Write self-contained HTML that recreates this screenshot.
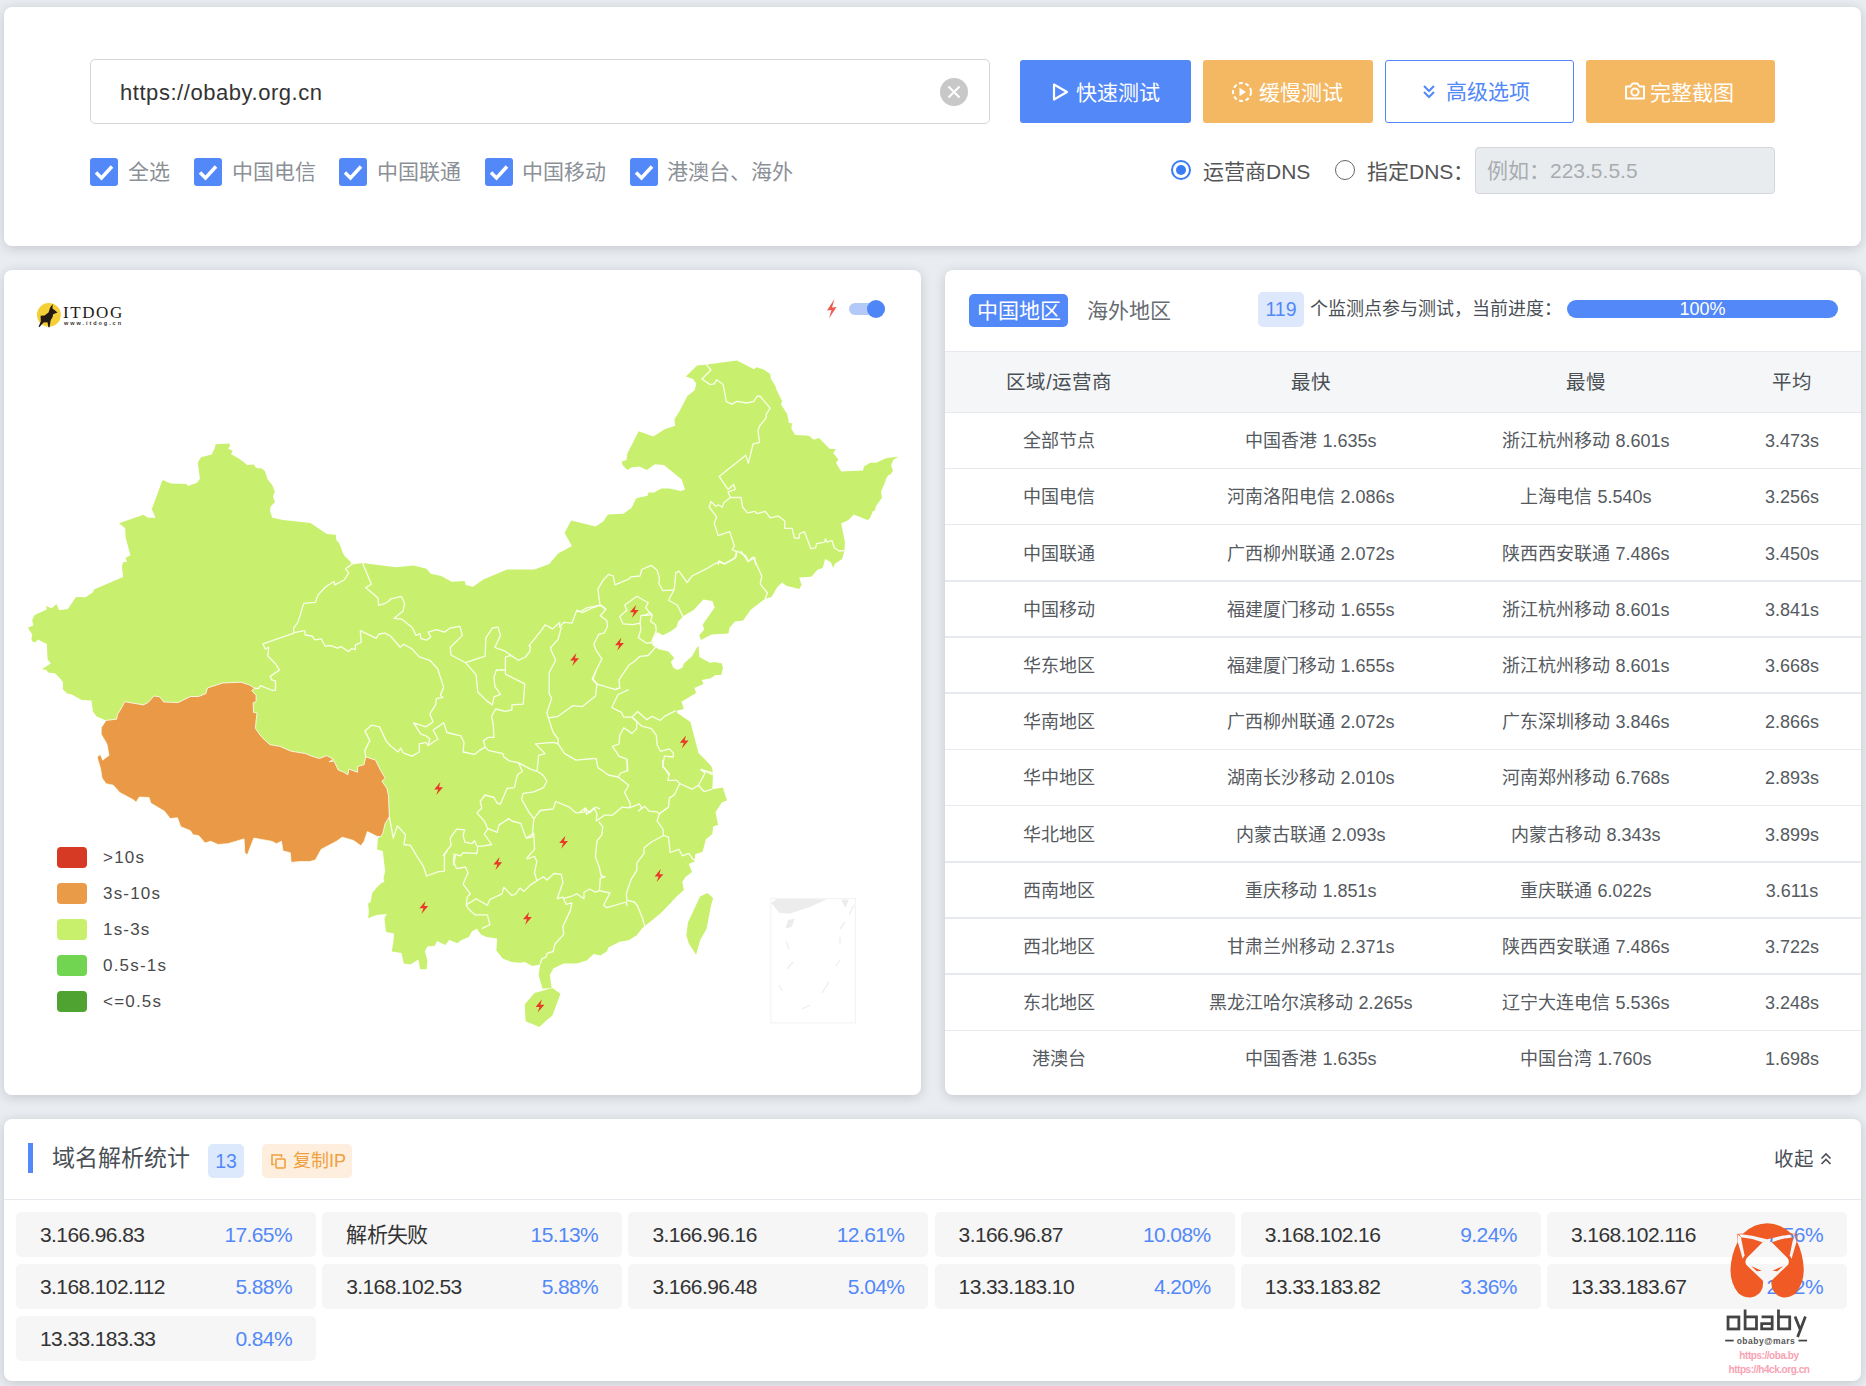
<!DOCTYPE html>
<html lang="zh-CN"><head><meta charset="utf-8">
<style>
*{box-sizing:border-box;margin:0;padding:0}
html,body{width:1866px;height:1386px;overflow:hidden}
body{background:#e9ecf1;font-family:"Liberation Sans",sans-serif;color:#333;position:relative}
.abs{position:absolute}
.panel{position:absolute;background:#fff;border-radius:8px;box-shadow:0 2px 12px rgba(0,0,0,.16)}
.cb{position:absolute;top:158px;width:28px;height:28px;border-radius:3px;background:#5288f8}
.cb svg{position:absolute;left:0;top:0}
.lbl{position:absolute;top:158px;height:28px;line-height:28px;font-size:21px;color:#8b9097;white-space:nowrap}
.btn{position:absolute;top:60px;height:63px;border-radius:3px;color:#fff;font-size:21px;line-height:63px;white-space:nowrap}
.btn span{position:absolute;top:1px}
.th{position:absolute;top:351px;height:62px;line-height:62px;font-size:19.5px;color:#4a4f55;text-align:center;white-space:nowrap}
.row{position:absolute;left:945px;width:916px;height:56px;border-top:1.5px solid #e4e7ec}
.cell{position:absolute;top:0;height:56px;line-height:58px;font-size:18px;color:#555a60;text-align:center;white-space:nowrap}
.card{position:absolute;width:300px;height:45px;background:#f6f6f6;border-radius:5px;font-size:21px;line-height:45px;letter-spacing:-0.6px}
.card .ip{position:absolute;left:24px;top:0;color:#333}
.card .pc{position:absolute;right:24px;top:0;color:#5288f8}
</style></head><body>

<!-- top panel -->
<div class="panel" style="left:4px;top:7px;width:1857px;height:239px"></div>
<div class="abs" style="left:90px;top:59px;width:900px;height:65px;border:1.5px solid #d3d7dc;border-radius:5px;background:#fff"></div>
<div class="abs" style="left:120px;top:60px;height:65px;line-height:65px;font-size:22px;color:#333;letter-spacing:0.55px">https://obaby.org.cn</div>
<div class="abs" style="left:940px;top:78px;width:28px;height:28px;border-radius:50%;background:#c8c8c8">
 <svg width="28" height="28" viewBox="0 0 28 28"><path d="M8.5 8.5L19.5 19.5M19.5 8.5L8.5 19.5" stroke="#fff" stroke-width="2.2" fill="none"/></svg>
</div>

<div class="btn" style="left:1020px;width:171px;background:#5288f8">
 <svg class="abs" style="left:32px;top:23px" width="17" height="18" viewBox="0 0 17 18"><path d="M2 1.5L15 9L2 16.5Z" fill="none" stroke="#fff" stroke-width="2.2" stroke-linejoin="round"/></svg>
 <span style="left:56px">快速测试</span>
</div>
<div class="btn" style="left:1203px;width:170px;background:#f4b862">
 <svg class="abs" style="left:28px;top:21px" width="22" height="22" viewBox="0 0 22 22"><circle cx="11" cy="11" r="9" fill="none" stroke="#fff" stroke-width="2" stroke-dasharray="4 2.5"/><path d="M8.5 6.8L15 11L8.5 15.2Z" fill="#fff"/></svg>
 <span style="left:56px">缓慢测试</span>
</div>
<div class="btn" style="left:1385px;width:189px;background:#fff;border:1.5px solid #5288f8;color:#5288f8">
 <svg class="abs" style="left:36px;top:22px" width="14" height="18" viewBox="0 0 14 18"><path d="M2 3L7 8L12 3M2 9L7 14L12 9" fill="none" stroke="#5288f8" stroke-width="2"/></svg>
 <span style="left:60px;line-height:60px">高级选项</span>
</div>
<div class="btn" style="left:1586px;width:189px;background:#f4b862">
 <svg class="abs" style="left:38px;top:21px" width="22" height="20" viewBox="0 0 22 20"><path d="M2 5.5h4.5l2-3h5l2 3H20v12H2z" fill="none" stroke="#fff" stroke-width="2" stroke-linejoin="round"/><circle cx="11" cy="11" r="3.6" fill="none" stroke="#fff" stroke-width="2"/></svg>
 <span style="left:64px">完整截图</span>
</div>

<div class="cb" style="left:90px"><svg width="28" height="28"><path d="M6 14.5L11.5 20L22 8.5" fill="none" stroke="#fff" stroke-width="3.5"/></svg></div>
<div class="lbl" style="left:128px">全选</div>
<div class="cb" style="left:194px"><svg width="28" height="28"><path d="M6 14.5L11.5 20L22 8.5" fill="none" stroke="#fff" stroke-width="3.5"/></svg></div>
<div class="lbl" style="left:232px">中国电信</div>
<div class="cb" style="left:339px"><svg width="28" height="28"><path d="M6 14.5L11.5 20L22 8.5" fill="none" stroke="#fff" stroke-width="3.5"/></svg></div>
<div class="lbl" style="left:377px">中国联通</div>
<div class="cb" style="left:485px"><svg width="28" height="28"><path d="M6 14.5L11.5 20L22 8.5" fill="none" stroke="#fff" stroke-width="3.5"/></svg></div>
<div class="lbl" style="left:522px">中国移动</div>
<div class="cb" style="left:630px"><svg width="28" height="28"><path d="M6 14.5L11.5 20L22 8.5" fill="none" stroke="#fff" stroke-width="3.5"/></svg></div>
<div class="lbl" style="left:667px">港澳台、海外</div>

<div class="abs" style="left:1171px;top:160px;width:20px;height:20px;border-radius:50%;border:2px solid #3a7cf6"><div class="abs" style="left:3px;top:3px;width:10px;height:10px;border-radius:50%;background:#3a7cf6"></div></div>
<div class="lbl" style="left:1203px;color:#555">运营商DNS</div>
<div class="abs" style="left:1335px;top:160px;width:20px;height:20px;border-radius:50%;border:1.5px solid #666"></div>
<div class="lbl" style="left:1367px;color:#555">指定DNS：</div>
<div class="abs" style="left:1475px;top:147px;width:300px;height:47px;background:#e9ecef;border:1.5px solid #d3d7dc;border-radius:4px"></div>
<div class="lbl" style="left:1487px;top:157px;color:#a8acb1">例如：223.5.5.5</div>

<!-- map panel -->
<div class="panel" style="left:4px;top:270px;width:917px;height:825px"></div>
<svg class="abs" style="left:0;top:0" width="921" height="1095" viewBox="0 0 921 1095">
<path d="M215.6 444.3 L229.4 443.6 L230.2 446.2 L227.8 448.2 L232.7 451.1 L231.0 454.0 L240.0 459.2 L247.3 464.9 L253.8 464.4 L256.2 468.1 L261.9 468.6 L265.1 471.4 L267.6 479.5 L272.4 485.2 L274.9 491.7 L272.9 496.2 L274.9 502.2 L270.8 506.3 L270.0 511.2 L272.4 517.7 L283.0 520.1 L310.6 522.9 L326.8 533.9 L335.7 534.7 L336.5 540.4 L339.0 542.8 L343.8 555.0 L350.3 561.5 L351.9 564.4 L362.5 563.1 L395.8 567.2 L413.6 565.6 L426.6 568.8 L430.7 573.7 L441.2 576.1 L451.8 581.8 L464.8 581.0 L465.6 585.0 L472.9 586.7 L483.4 579.4 L507.0 569.6 L534.6 569.6 L549.2 563.9 L558.1 553.4 L571.9 546.1 L564.6 533.1 L571.1 520.6 L595.5 526.6 L603.0 521.8 L607.9 514.5 L623.3 513.7 L631.4 508.0 L636.3 498.3 L647.6 495.8 L648.4 492.6 L654.1 492.6 L661.4 488.5 L669.5 488.5 L680.9 491.0 L685.0 489.4 L681.7 479.6 L663.9 465.0 L654.9 464.2 L646.8 469.9 L639.5 466.6 L631.4 467.4 L627.3 469.9 L622.5 465.0 L621.7 461.4 L626.5 460.1 L627.3 453.6 L638.7 431.2 L653.3 436.6 L664.7 429.3 L675.2 425.7 L674.4 419.5 L679.3 411.4 L687.4 396.0 L694.7 390.3 L696.3 383.8 L693.1 379.0 L685.8 376.5 L697.1 365.6 L706.9 364.4 L736.9 360.6 L754.0 369.2 L756.4 367.3 L763.7 369.5 L770.2 374.1 L771.0 379.0 L775.1 385.5 L776.7 390.3 L782.4 401.7 L780.7 404.1 L787.2 413.9 L788.9 422.8 L792.1 423.6 L791.3 428.5 L795.2 434.9 L808.9 435.7 L813.8 439.7 L819.0 438.1 L829.9 449.0 L836.0 449.0 L833.2 453.0 L838.4 459.5 L836.0 462.7 L841.2 471.6 L863.1 470.4 L863.9 466.4 L870.3 462.7 L876.4 462.7 L886.5 457.9 L898.2 456.7 L893.4 459.9 L891.0 465.2 L893.0 470.8 L890.6 474.5 L888.5 474.9 L886.1 478.5 L885.7 480.5 L880.9 492.2 L882.1 497.5 L876.0 506.0 L874.8 510.4 L872.8 511.2 L869.9 518.5 L867.5 520.1 L853.8 514.5 L848.5 520.1 L841.2 523.4 L844.9 542.0 L844.6 550.0 L842.2 558.9 L834.9 563.8 L833.2 567.9 L830.8 562.2 L825.1 558.9 L822.7 567.9 L817.8 569.5 L811.3 576.8 L799.2 577.6 L801.6 584.9 L799.2 589.0 L786.2 585.7 L782.1 582.5 L777.2 587.3 L771.6 597.1 L765.1 598.7 L750.5 610.1 L743.2 620.6 L735.0 621.4 L729.4 627.9 L728.5 633.6 L711.5 634.4 L700.9 640.1 L699.3 635.2 L704.2 629.5 L702.6 624.7 L714.7 607.6 L712.3 601.1 L703.4 599.5 L693.6 610.1 L683.9 615.7 L678.2 621.4 L676.6 627.1 L670.9 631.2 L662.8 635.2 L657.1 632.0 L652.2 639.3 L653.1 644.2 L657.9 649.0 L668.5 651.5 L674.2 658.0 L670.9 662.0 L673.3 667.7 L677.4 670.1 L682.3 667.7 L683.9 663.6 L692.0 656.3 L696.9 647.4 L698.5 645.8 L699.3 657.1 L709.9 662.8 L714.7 662.0 L722.0 663.6 L722.9 668.5 L721.2 675.0 L715.6 675.0 L710.7 678.2 L701.8 679.9 L703.4 683.9 L694.5 688.0 L696.1 692.9 L681.5 701.8 L683.9 709.1 L676.6 710.7 L677.4 713.1 L690.4 722.1 L698.5 752.9 L705.0 759.4 L711.5 766.5 L713.1 773.0 L712.3 789.2 L722.9 787.6 L726.9 800.6 L722.0 802.2 L715.6 811.9 L718.0 825.0 L713.1 826.6 L712.3 833.9 L705.8 839.5 L702.6 851.7 L695.3 854.2 L694.5 861.5 L688.8 863.9 L692.0 872.0 L685.5 876.9 L682.3 881.8 L683.9 889.9 L676.6 896.4 L667.7 906.1 L660.4 913.4 L647.4 924.0 L641.7 928.8 L636.8 935.3 L628.7 940.2 L619.7 941.7 L608.4 947.4 L606.8 951.5 L600.3 955.5 L593.8 953.9 L586.5 960.4 L576.7 963.6 L563.7 963.6 L553.2 968.5 L549.9 975.0 L551.6 988.0 L542.6 988.8 L538.6 975.0 L540.2 964.4 L532.1 966.1 L524.8 962.0 L519.9 962.8 L511.8 962.0 L502.9 958.8 L496.4 950.6 L497.2 938.5 L486.6 936.9 L480.9 934.4 L476.9 928.7 L472.0 931.2 L468.8 936.9 L461.5 940.1 L457.4 943.3 L449.3 940.1 L445.2 945.0 L437.1 940.9 L434.7 945.8 L427.4 946.6 L424.9 951.5 L427.4 960.4 L426.6 969.3 L420.1 969.3 L418.4 959.6 L410.3 964.4 L403.8 963.6 L401.4 953.1 L391.7 951.5 L393.3 942.5 L394.1 933.6 L386.0 932.0 L384.4 918.2 L386.8 914.1 L376.2 914.9 L368.1 918.2 L368.9 911.7 L368.1 903.6 L370.6 901.9 L372.2 893.0 L376.2 888.1 L381.1 883.3 L384.4 881.7 L383.5 878.4 L385.2 871.1 L384.4 865.0 L382.8 851.0 L377.1 849.4 L377.9 838.0 L381.2 836.4 L377.1 836.4 L367.4 831.6 L364.1 841.3 L360.9 845.8 L353.6 840.5 L342.2 837.2 L336.5 841.3 L321.1 849.4 L315.4 860.0 L309.7 861.6 L300.0 861.6 L291.1 862.4 L290.3 852.7 L283.0 851.0 L281.4 841.3 L276.5 843.7 L271.6 841.3 L253.8 838.1 L247.3 855.1 L244.8 852.7 L244.0 838.9 L227.8 843.7 L218.0 844.5 L210.8 841.3 L205.1 842.9 L198.6 835.6 L192.9 834.8 L190.5 830.7 L180.7 826.7 L177.5 817.8 L170.2 818.6 L164.5 811.3 L150.7 803.1 L149.1 797.5 L139.3 797.1 L136.1 802.3 L133.6 799.9 L119.8 792.6 L113.3 785.3 L106.0 783.7 L102.0 778.0 L100.4 768.2 L97.1 756.9 L100.4 754.4 L102.8 760.1 L109.0 755.3 L106.9 743.9 L101.2 734.2 L101.2 727.7 L106.0 720.4 L96.3 716.3 L93.0 711.4 L91.4 700.4 L81.7 700.0 L71.9 694.4 L67.1 693.6 L63.0 689.5 L63.0 682.2 L59.0 677.3 L54.9 673.3 L47.6 672.5 L46.8 670.0 L41.9 669.2 L50.8 663.5 L47.6 659.5 L46.8 644.0 L37.9 639.4 L35.4 642.3 L33.0 641.9 L31.4 639.4 L32.2 634.5 L27.8 627.7 L33.3 625.6 L32.2 619.9 L34.6 615.1 L46.8 609.4 L46.0 606.1 L51.7 608.2 L56.5 604.0 L59.0 610.2 L67.9 608.9 L76.0 596.9 L85.7 597.2 L93.0 592.3 L93.9 589.4 L123.1 576.9 L122.0 566.4 L123.1 562.3 L127.1 561.5 L125.5 557.9 L130.4 555.3 L125.5 537.1 L125.2 528.2 L119.0 523.3 L143.4 514.7 L148.2 517.7 L155.6 517.7 L151.8 509.2 L162.5 480.0 L171.0 483.6 L186.4 483.9 L188.0 486.0 L197.0 482.8 L199.9 478.7 L197.8 462.5 L201.0 457.3 L211.6 454.4 L214.8 447.9 Z" fill="#c8f06e"/>
<path d="M707.4 893.1 L713.1 898.0 L710.7 906.9 L706.6 928.8 L700.1 940.2 L696.1 954.8 L688.8 943.4 L686.3 935.3 L688.0 922.3 L700.1 896.4 Z" fill="#c8f06e"/>
<path d="M552.4 988.0 L560.5 993.7 L552.4 1015.6 L547.5 1019.6 L539.4 1026.9 L525.6 1021.3 L524.8 1004.2 L534.5 992.9 Z" fill="#c8f06e"/>
<path d="M106.0 720.4 L116.6 719.2 L117.4 714.7 L122.3 706.6 L124.7 701.7 L143.4 704.9 L148.2 702.5 L153.9 696.0 L159.6 696.8 L163.7 702.0 L178.3 702.5 L190.5 696.5 L198.6 696.5 L205.9 693.6 L207.5 687.9 L222.9 683.0 L240.8 682.2 L248.8 684.7 L254.6 688.1 L251.7 690.5 L256.1 695.4 L256.1 701.7 L253.1 702.7 L253.6 712.4 L257.0 713.0 L256.2 719.5 L255.4 728.5 L261.9 737.4 L270.0 744.7 L279.7 746.3 L291.1 751.2 L296.0 752.0 L305.7 753.6 L311.4 756.1 L319.5 758.5 L326.8 755.6 L333.3 759.3 L329.2 761.8 L334.1 761.0 L338.1 769.9 L343.8 772.3 L347.9 774.7 L348.7 769.1 L357.6 772.3 L357.6 766.6 L364.1 764.7 L365.7 756.9 L375.5 760.1 L381.2 771.5 L385.2 778.0 L382.0 781.2 L386.9 788.5 L388.5 795.8 L389.3 816.9 L385.2 823.4 L382.8 833.2 L381.2 836.4 L377.1 836.4 L367.4 831.6 L364.1 841.3 L360.9 845.8 L353.6 840.5 L342.2 837.2 L336.5 841.3 L321.1 849.4 L315.4 860.0 L309.7 861.6 L300.0 861.6 L291.1 862.4 L290.3 852.7 L283.0 851.0 L281.4 841.3 L276.5 843.7 L271.6 841.3 L253.8 838.1 L247.3 855.1 L244.8 852.7 L244.0 838.9 L227.8 843.7 L218.0 844.5 L210.8 841.3 L205.1 842.9 L198.6 835.6 L192.9 834.8 L190.5 830.7 L180.7 826.7 L177.5 817.8 L170.2 818.6 L164.5 811.3 L150.7 803.1 L149.1 797.5 L139.3 797.1 L136.1 802.3 L133.6 799.9 L119.8 792.6 L113.3 785.3 L106.0 783.7 L102.0 778.0 L100.4 768.2 L97.1 756.9 L100.4 754.4 L102.8 760.1 L109.0 755.3 L106.9 743.9 L101.2 734.2 L101.2 727.7 L106.0 720.4 Z" fill="#ea9a46" stroke="#fff" stroke-width="1" stroke-opacity=".8"/>
<g fill="none" stroke="#fdfff5" stroke-width="1.3" stroke-opacity=".92" stroke-linejoin="round">
<path d="M351.9 564.4 L345.5 568.8 L348.7 572.9 L344.2 580.0 L334.9 584.9 L334.0 581.5 L325.7 586.8 L317.9 595.1 L315.5 602.4 L303.8 603.4 L297.9 622.4 L293.6 628.2 L294.0 633.1"/>
<path d="M294.0 633.1 L262.9 643.8 L265.3 649.1 L268.7 647.2 L267.8 656.0 L275.5 663.7 L279.4 670.1 L270.2 676.4 L271.6 679.8 L275.5 680.8 L275.5 690.0 L272.6 690.5 L260.4 685.6 L258.5 688.6 L254.6 688.1"/>
<path d="M294.0 632.6 L304.8 630.6 L305.2 635.0 L312.1 636.0 L315.0 639.9 L321.3 638.9 L325.2 646.2 L331.0 645.7 L337.4 648.2 L341.3 646.7 L348.6 651.6 L351.5 648.6 L355.4 649.6 L355.4 644.8 L361.2 642.3 L360.3 630.6 L376.3 638.4 L378.8 634.0 L385.1 633.1 L390.4 636.0 L400.2 647.2 L403.6 644.3 L412.3 649.1 L419.2 656.9 L429.9 660.3 L438.0 669.2 L439.6 674.9 L443.7 687.1 L440.4 695.2 L442.9 697.6 L436.4 698.4 L435.6 704.9 L429.9 713.9 L433.1 722.0 L425.8 726.9 L413.6 722.8 L420.9 734.2 L425.8 735.8 L429.9 739.0 L428.2 745.5"/>
<path d="M365.7 756.9 L364.9 750.4 L369.8 740.6 L364.9 730.9 L371.4 725.2 L379.5 726.9 L386.0 740.6 L390.1 745.5 L398.2 752.0 L400.6 748.0 L403.1 752.8 L412.0 756.1 L419.3 752.0 L419.3 743.9 L425.8 742.3 L428.2 745.5"/>
<path d="M428.2 745.5 L438.0 739.0 L433.1 730.1 L443.7 722.8 L446.9 732.5 L460.7 735.8 L464.0 742.3 L463.1 752.0 L474.5 754.4 L479.4 750.4 L485.1 747.1 L483.4 740.6 L488.3 737.4 L494.0 737.4 L493.2 724.4 L491.6 716.3 L495.6 709.0 L505.4 711.4 L511.9 709.8 L511.9 704.9 L523.2 704.1 L524.8 683.8 L505.4 674.1 L505.4 657.0 L511.0 655.4"/>
<path d="M362.5 563.1 L371.4 584.2 L365.7 587.5 L377.9 598.0 L378.7 605.3 L384.4 603.7 L388.5 601.3 L390.9 598.8 L401.5 596.4 L404.7 603.7 L403.1 611.0 L394.2 618.3 L401.5 619.1 L412.0 627.2 L416.1 635.4 L420.1 633.7 L420.9 638.6 L426.6 640.2 L430.7 637.0 L428.2 632.1 L436.4 629.7 L444.5 632.1 L450.2 628.0 L459.9 626.4 L462.3 635.4 L450.2 647.5 L451.0 655.0 L465.6 662.7 L485.1 656.2 L485.9 637.8 L492.4 628.0 L498.1 627.2 L500.5 635.4 L494.8 647.5 L504.5 650.8 L511.0 655.4 L518.3 660.3 L525.6 657.0 L529.7 651.4 L530.5 646.5 L528.9 645.9 L541.9 629.7 L545.1 624.8 L552.4 628.9 L559.7 622.4 L559.7 627.2 L563.8 622.4 L571.9 623.2 L576.8 610.2 L582.5 612.7 L592.2 607.8 L600.0 605.3 L606.0 609.3"/>
<path d="M465.6 662.7 L476.1 674.9 L477.8 692.0 L486.7 700.9 L492.4 704.9 L494.0 696.8 L500.5 694.4 L494.8 686.3 L494.0 677.3 L496.4 670.0 L505.4 670.0"/>
<path d="M561.4 627.2 L558.1 639.4 L550.8 647.5 L550.8 649.7 L555.7 660.3 L549.2 672.5 L549.2 693.6 L551.7 698.4 L546.8 713.0 L548.4 717.9 L558.1 716.3 L572.7 705.7 L582.5 706.6 L595.5 696.0 L597.1 683.8 L593.0 679.0 L596.2 670.1"/>
<path d="M548.4 717.9 L553.2 732.5 L558.1 739.0 L558.1 743.9 L553.2 742.3 L535.4 743.9 L545.1 753.6 L538.6 755.3 L537.0 771.5 L530.5 769.1 L518.3 762.6 L509.4 760.9 L503.7 756.9 L502.9 753.6 L488.3 750.4 L485.1 747.1"/>
<path d="M558.1 743.9 L564.6 753.6 L576.0 760.1 L593.8 758.5 L596.2 758.6 L597.9 767.5 L608.4 775.0 L618.1 777.0"/>
<path d="M518.3 762.6 L522.4 771.5 L517.5 774.7 L514.3 787.7 L507.0 788.5 L500.5 804.0 L497.2 803.1 L494.0 797.5 L485.1 795.0 L480.2 801.5 L481.8 808.0 L476.9 812.9 L484.3 821.0 L487.5 828.3 L497.2 832.4 L498.9 825.1 L508.6 818.6 L511.9 821.0 L520.8 823.4 L524.8 834.8 L526.5 838.1 L532.1 837.2 L533.8 818.6 L528.9 812.1 L521.6 799.1 L523.2 793.4 L533.8 791.8 L543.5 787.7 L546.8 781.2 L543.5 775.6 L537.8 771.5"/>
<path d="M533.8 818.6 L540.3 810.5 L553.2 808.8 L555.7 801.5 L569.5 807.2 L576.0 812.9 L584.1 812.1 L585.7 808.8 L589.8 812.9 L595.5 807.2 L600.0 808.8"/>
<path d="M389.3 816.9 L393.3 838.1 L397.4 825.9 L405.5 834.8 L403.9 844.5 L410.4 845.3 L417.7 857.5 L423.3 866.2 L426.6 876.0 L437.9 871.9 L444.4 871.1 L444.4 854.9 L447.7 850.0"/>
<path d="M442.9 855.9 L451.0 845.3 L450.2 838.1 L456.7 829.1 L464.8 829.9 L463.1 834.8 L464.8 842.1 L472.1 843.7 L474.5 840.5 L476.9 846.2 L482.6 846.2 L491.6 844.5 L484.3 834.0 L488.3 828.3"/>
<path d="M453.4 865.0 L455.8 854.3 L460.7 855.9 L463.1 852.7 L476.9 853.5 L477.8 847.0"/>
<path d="M526.5 838.1 L533.8 833.2 L534.6 849.4 L527.3 857.5 L527.2 858.9 L534.5 856.5 L536.9 861.4 L534.5 872.7 L536.9 880.8"/>
<path d="M454.2 853.2 L453.4 861.4 L456.6 868.7 L465.5 867.0 L468.0 872.7 L463.1 884.1 L470.4 893.8 L467.1 897.1 L466.3 905.2 L468.8 909.3 L475.3 914.9 L487.4 914.9 L489.9 924.7 L481.8 928.7"/>
<path d="M467.1 904.4 L476.1 898.7 L487.4 905.2 L489.9 899.5 L502.0 893.8 L503.7 887.3 L511.8 895.5 L515.8 893.8 L519.9 888.1 L524.0 891.4 L530.5 884.9 L537.0 880.8 L543.5 876.8 L546.8 880.0 L554.0 873.5 L561.3 874.4 L562.9 882.5 L557.2 898.7 L562.9 897.1 L566.2 904.4 L571.9 902.8"/>
<path d="M571.9 902.8 L570.2 910.9 L562.9 926.3 L563.7 934.4 L554.8 944.2 L553.2 951.5 L547.5 953.1 L545.9 957.1 L541.8 958.8 L540.2 964.4"/>
<path d="M563.7 898.7 L573.5 895.5 L576.7 893.8 L584.0 898.7 L584.0 892.2 L589.7 889.0 L595.4 892.2 L599.4 890.6 L610.0 893.0 L603.5 905.2 L606.8 907.6 L626.2 902.0 L627.1 906.0"/>
<path d="M598.7 821.7 L602.7 826.6 L601.9 834.7 L597.0 841.2 L595.4 856.6 L599.5 868.0 L601.1 876.0 L605.1 876.8 L600.3 878.4 L599.4 890.6"/>
<path d="M663.6 835.5 L651.4 842.0 L644.1 847.7 L644.1 853.3 L636.8 863.1 L636.8 870.4 L631.1 879.3 L626.3 893.9 L627.1 901.2"/>
<path d="M627.1 900.3 L634.4 902.0 L637.6 906.0 L642.5 918.2 L645.7 929.5"/>
<path d="M679.8 783.5 L675.8 791.7 L674.2 794.9 L669.3 798.1 L668.5 807.1 L659.5 813.6 L657.1 820.9 L662.8 829.0 L663.6 835.5 L668.5 837.1 L670.1 852.5 L679.0 849.3 L682.3 855.8 L688.8 853.4 L692.8 859.0 L696.1 860.6"/>
<path d="M662.8 760.0 L662.8 766.5 L669.3 773.8 L667.7 780.3 L676.6 780.3 L679.8 783.5 L692.0 789.2 L698.5 785.2 L705.0 773.0 L700.9 769.7 L713.1 773.0"/>
<path d="M698.5 785.2 L704.2 791.7 L712.3 789.2"/>
<path d="M627.1 760.0 L627.9 770.6 L620.6 773.0 L618.1 777.0 L628.7 785.2 L624.6 792.5 L630.3 803.8 L629.5 807.9 L639.3 803.8 L641.7 807.9 L638.4 811.1 L644.9 806.3 L649.0 811.1 L657.1 811.9 L659.5 814.4"/>
<path d="M580.0 812.0 L585.7 807.9 L586.5 814.4 L593.8 807.9 L597.0 813.6 L596.2 820.9 L604.4 815.2 L612.5 815.2 L622.2 807.1 L629.5 807.9"/>
<path d="M624.6 605.2 L636.8 596.3 L648.2 602.8 L645.7 607.6 L651.4 614.9 L640.9 615.7 L640.1 623.1 L632.8 624.7 L623.0 623.9 L619.8 616.6 L627.1 610.1 L624.6 605.2"/>
<path d="M640.9 615.7 L645.7 614.9 L649.8 612.5 L652.2 614.9 L650.6 621.4 L655.5 624.7 L656.3 630.4 L651.4 642.5 L646.6 643.3 L638.4 637.7 L640.9 629.5 L640.1 623.1"/>
<path d="M651.4 642.5 L655.5 647.4 L648.2 655.5 L640.1 656.3 L633.6 662.0 L628.7 665.3 L619.0 679.9 L619.8 688.0 L615.7 688.8"/>
<path d="M580.0 611.7 L587.3 607.6 L601.1 605.2 L606.0 609.3 L600.3 615.7 L606.8 620.6 L607.6 626.3 L604.4 632.8 L598.7 634.4 L593.8 644.2 L596.2 650.6 L601.9 658.8 L596.2 670.1 L592.2 679.1 L596.2 683.9 L615.7 689.6 L619.8 688.0"/>
<path d="M628.7 689.6 L618.1 694.5 L611.7 707.5 L621.4 712.3 L623.8 717.2 L631.9 717.2 L637.6 711.5 L646.6 719.6 L652.2 716.4 L660.4 720.5 L664.4 716.4 L675.8 710.7"/>
<path d="M631.9 717.2 L636.8 721.3 L636.8 728.6 L631.9 733.4 L623.8 727.8 L619.8 735.1 L619.0 744.0 L612.5 746.4 L619.0 756.2 L627.1 759.4 L627.1 770.6"/>
<path d="M631.9 717.2 L641.7 726.1 L651.4 728.6 L656.3 735.1 L657.1 744.8 L660.4 751.3 L669.3 748.9 L673.3 752.9 L673.3 757.0 L664.4 756.2 L662.8 765.9 L669.3 775.0"/>
<path d="M700.9 769.2 L713.1 775.0"/>
<path d="M597.9 589.0 L602.7 580.8 L608.4 574.4 L613.3 576.0 L614.9 584.9 L628.7 579.2 L631.1 576.8 L640.1 576.0 L641.7 569.5 L651.4 565.4 L657.1 570.3 L659.5 578.4 L658.8 583.3 L662.8 590.6 L674.2 589.8 L668.5 600.3 L677.4 605.2 L683.1 616.6"/>
<path d="M600.0 605.3 L597.9 589.0"/>
<path d="M674.2 589.8 L675.8 572.7 L679.0 571.1 L687.1 582.5 L692.0 576.0 L706.6 568.7 L714.7 563.8 L718.8 562.2 L724.5 563.8 L735.0 558.1 L736.7 550.8"/>
<path d="M740.7 550.8 L748.0 561.4 L753.7 558.1 L761.8 576.0 L760.2 584.1 L767.5 593.0 L765.1 598.7"/>
<path d="M706.1 364.4 L710.9 370.0 L702.0 379.0 L710.1 384.6 L714.2 383.8 L716.6 379.8 L723.1 384.6 L726.4 401.7 L732.0 404.1 L736.9 401.4 L746.7 403.0 L754.0 401.4 L757.2 396.0 L760.4 396.5 L770.2 408.2 L766.1 414.7 L766.1 417.9 L759.6 426.0 L758.0 430.9 L759.6 442.3 L753.1 443.9 L748.3 463.4 L745.8 455.3 L719.1 476.4 L728.0 489.4 L733.7 484.5 L735.3 489.4 L728.0 491.8 L730.4 497.5"/>
<path d="M730.4 497.5 L741.0 497.5 L742.6 507.2 L747.5 512.9 L754.8 511.3 L757.2 513.7 L765.3 511.3 L770.2 517.8 L778.3 516.1 L784.8 521.0 L784.8 528.3 L792.1 528.3 L794.5 538.1 L799.4 538.1 L799.4 534.0 L804.3 531.6 L810.8 548.6 L815.6 547.8 L816.5 543.7 L824.6 542.1 L825.4 538.9 L827.0 542.1 L831.9 540.5 L834.3 547.8 L839.2 551.0 L844.5 550.7"/>
<path d="M730.4 497.5 L723.9 502.4 L722.3 507.2 L718.2 504.8 L715.8 506.4 L710.9 501.5 L709.3 507.2 L716.6 516.9 L714.2 523.4 L718.2 535.6 L729.6 531.6 L734.5 546.2 L732.0 549.4 L736.9 551.8 L736.1 556.7 L732.9 559.2 L724.7 564.0 L719.1 560.8 L718.2 565.0"/>
<path d="M736.9 551.0 L745.8 555.9 L748.3 561.6 L752.3 557.5 L754.8 557.5 L755.6 565.0"/>
</g>
<rect x="770.8" y="898.6" width="84.6" height="124.3" fill="none" stroke="#f2f2f2" stroke-width="1"/>
<path d="M771.2 902.9 L776.8 899 L827.1 899.2 L810.3 906.8 L790.2 913.5 L779.6 913 Z M841 899.6 L848.9 899.6 L845.5 908 Z M788 920 L795 918.5 L791.5 927 L785.5 928.5 Z" fill="#ececec"/>
<g stroke="#eeeeee" stroke-width="1.3" fill="none"><path d="M854 905 L849 915 M845 922 L840 929 M840 937 L840 944 M840 960 L836 966 M829 982 L822 993 M810 1005 L802 1009 M786 941 L789 949 M793 962 L787 969 M779 985 L782 991"/></g>
<g fill="#e8392a">
<path transform="translate(629.3,604.9)" d="M6.8 0 L0.6 7.4 L4.6 7.4 L2.6 13 L9.4 5.2 L5.4 5.2 Z"/>
<path transform="translate(614.5,637.8)" d="M6.8 0 L0.6 7.4 L4.6 7.4 L2.6 13 L9.4 5.2 L5.4 5.2 Z"/>
<path transform="translate(569.6,653.1)" d="M6.8 0 L0.6 7.4 L4.6 7.4 L2.6 13 L9.4 5.2 L5.4 5.2 Z"/>
<path transform="translate(679.2,735.4)" d="M6.8 0 L0.6 7.4 L4.6 7.4 L2.6 13 L9.4 5.2 L5.4 5.2 Z"/>
<path transform="translate(433.6,782.0)" d="M6.8 0 L0.6 7.4 L4.6 7.4 L2.6 13 L9.4 5.2 L5.4 5.2 Z"/>
<path transform="translate(558.6,835.7)" d="M6.8 0 L0.6 7.4 L4.6 7.4 L2.6 13 L9.4 5.2 L5.4 5.2 Z"/>
<path transform="translate(492.8,857.1)" d="M6.8 0 L0.6 7.4 L4.6 7.4 L2.6 13 L9.4 5.2 L5.4 5.2 Z"/>
<path transform="translate(654.0,869.1)" d="M6.8 0 L0.6 7.4 L4.6 7.4 L2.6 13 L9.4 5.2 L5.4 5.2 Z"/>
<path transform="translate(418.8,900.9)" d="M6.8 0 L0.6 7.4 L4.6 7.4 L2.6 13 L9.4 5.2 L5.4 5.2 Z"/>
<path transform="translate(522.4,911.9)" d="M6.8 0 L0.6 7.4 L4.6 7.4 L2.6 13 L9.4 5.2 L5.4 5.2 Z"/>
<path transform="translate(535.0,999.6)" d="M6.8 0 L0.6 7.4 L4.6 7.4 L2.6 13 L9.4 5.2 L5.4 5.2 Z"/>
</g>
</svg>

<!-- table panel -->
<div class="panel" style="left:945px;top:270px;width:916px;height:825px"></div>

<!-- bottom panel -->
<div class="panel" style="left:4px;top:1119px;width:1857px;height:262px"></div>
<!-- map extras -->
<svg class="abs" style="left:36px;top:302px" width="26" height="26" viewBox="0 0 26 26"><circle cx="12.9" cy="12.9" r="11.9" fill="#f4cf35"/><path d="M16.8 2 L14.2 5.5 L12.5 10.5 L8.5 13.6 L4.6 13.8 L4.8 19.5 L2.6 24.6 L3.3 25.2 L7.5 20.5 L11.5 20.3 L12.4 25.3 L13.6 25.3 L14.6 18.4 L16.6 15 L17.2 12.3 L21.5 10.6 L18.8 8.2 L16.4 6.5 Z" fill="#231a15"/></svg>
<div class="abs" style="left:63px;top:303.5px;font-family:'Liberation Serif',serif;font-size:17px;line-height:18px;color:#231a15;letter-spacing:1.6px">ITDOG</div>
<div class="abs" style="left:64px;top:320px;font-family:'Liberation Sans',sans-serif;font-size:5.5px;line-height:7px;color:#3a3232;letter-spacing:1.95px;font-weight:bold">www.itdog.cn</div>
<svg class="abs" style="left:825px;top:298px" width="14" height="22" viewBox="0 0 14 22"><path d="M9.5 1 L2 12.5 L6.5 12 L4 20.5 L11.5 9 L7 9.5 Z" fill="#ec5a4f"/></svg>
<div class="abs" style="left:849px;top:303px;width:36px;height:12px;border-radius:6px;background:#b3c9f8"></div>
<div class="abs" style="left:867px;top:300px;width:18px;height:18px;border-radius:50%;background:#4f86f7"></div>

<div class="abs" style="left:57px;top:847px;width:30px;height:21px;border-radius:4px;background:#d63a25"></div>
<div class="abs" style="left:103px;top:847px;height:21px;line-height:21px;font-size:17px;color:#4a4a4a;letter-spacing:1.2px">&gt;10s</div>
<div class="abs" style="left:57px;top:883px;width:30px;height:21px;border-radius:4px;background:#ea9b47"></div>
<div class="abs" style="left:103px;top:883px;height:21px;line-height:21px;font-size:17px;color:#4a4a4a;letter-spacing:1.2px">3s-10s</div>
<div class="abs" style="left:57px;top:919px;width:30px;height:21px;border-radius:4px;background:#c8f06c"></div>
<div class="abs" style="left:103px;top:919px;height:21px;line-height:21px;font-size:17px;color:#4a4a4a;letter-spacing:1.2px">1s-3s</div>
<div class="abs" style="left:57px;top:955px;width:30px;height:21px;border-radius:4px;background:#72d552"></div>
<div class="abs" style="left:103px;top:955px;height:21px;line-height:21px;font-size:17px;color:#4a4a4a;letter-spacing:1.2px">0.5s-1s</div>
<div class="abs" style="left:57px;top:991px;width:30px;height:21px;border-radius:4px;background:#4ea331"></div>
<div class="abs" style="left:103px;top:991px;height:21px;line-height:21px;font-size:17px;color:#4a4a4a;letter-spacing:1.2px">&lt;=0.5s</div>
<!-- table -->
<div class="abs" style="left:969px;top:294px;width:99px;height:33px;border-radius:5px;background:#5288f8;color:#fff;font-size:21px;line-height:33px;text-align:center">中国地区</div>
<div class="abs" style="left:1087px;top:294px;height:33px;font-size:21px;line-height:33px;color:#666b72">海外地区</div>
<div class="abs" style="left:1258px;top:292px;width:46px;height:35px;border-radius:5px;background:#dde8fd;color:#5288f8;font-size:19.5px;line-height:35px;text-align:center">119</div>
<div class="abs" style="left:1310px;top:292px;height:35px;font-size:18px;line-height:35px;color:#4a4f55">个监测点参与测试，当前进度：</div>
<div class="abs" style="left:1567px;top:300px;width:271px;height:18px;border-radius:9px;background:#5288f8;color:#fff;font-size:18px;line-height:18px;text-align:center">100%</div>
<div class="abs" style="left:945px;top:351px;width:916px;height:62px;background:#f5f6f7;border-top:1.5px solid #e6eaef;border-bottom:1.5px solid #e6eaef"></div>

<div class="th" style="left:959px;width:200px">区域/运营商</div>
<div class="th" style="left:1211px;width:200px">最快</div>
<div class="th" style="left:1486px;width:200px">最慢</div>
<div class="th" style="left:1692px;width:200px">平均</div>
<div class="cell" style="left:909px;width:300px;top:412.1px">全部节点</div>
<div class="cell" style="left:1161px;width:300px;top:412.1px">中国香港 1.635s</div>
<div class="cell" style="left:1436px;width:300px;top:412.1px">浙江杭州移动 8.601s</div>
<div class="cell" style="left:1642px;width:300px;top:412.1px">3.473s</div>
<div class="abs" style="left:945px;top:467.6px;width:916px;height:1.5px;background:#e6eaef"></div>
<div class="cell" style="left:909px;width:300px;top:468.3px">中国电信</div>
<div class="cell" style="left:1161px;width:300px;top:468.3px">河南洛阳电信 2.086s</div>
<div class="cell" style="left:1436px;width:300px;top:468.3px">上海电信 5.540s</div>
<div class="cell" style="left:1642px;width:300px;top:468.3px">3.256s</div>
<div class="abs" style="left:945px;top:523.8px;width:916px;height:1.5px;background:#e6eaef"></div>
<div class="cell" style="left:909px;width:300px;top:524.5px">中国联通</div>
<div class="cell" style="left:1161px;width:300px;top:524.5px">广西柳州联通 2.072s</div>
<div class="cell" style="left:1436px;width:300px;top:524.5px">陕西西安联通 7.486s</div>
<div class="cell" style="left:1642px;width:300px;top:524.5px">3.450s</div>
<div class="abs" style="left:945px;top:580.0px;width:916px;height:1.5px;background:#e6eaef"></div>
<div class="cell" style="left:909px;width:300px;top:580.7px">中国移动</div>
<div class="cell" style="left:1161px;width:300px;top:580.7px">福建厦门移动 1.655s</div>
<div class="cell" style="left:1436px;width:300px;top:580.7px">浙江杭州移动 8.601s</div>
<div class="cell" style="left:1642px;width:300px;top:580.7px">3.841s</div>
<div class="abs" style="left:945px;top:636.2px;width:916px;height:1.5px;background:#e6eaef"></div>
<div class="cell" style="left:909px;width:300px;top:636.9px">华东地区</div>
<div class="cell" style="left:1161px;width:300px;top:636.9px">福建厦门移动 1.655s</div>
<div class="cell" style="left:1436px;width:300px;top:636.9px">浙江杭州移动 8.601s</div>
<div class="cell" style="left:1642px;width:300px;top:636.9px">3.668s</div>
<div class="abs" style="left:945px;top:692.4px;width:916px;height:1.5px;background:#e6eaef"></div>
<div class="cell" style="left:909px;width:300px;top:693.1px">华南地区</div>
<div class="cell" style="left:1161px;width:300px;top:693.1px">广西柳州联通 2.072s</div>
<div class="cell" style="left:1436px;width:300px;top:693.1px">广东深圳移动 3.846s</div>
<div class="cell" style="left:1642px;width:300px;top:693.1px">2.866s</div>
<div class="abs" style="left:945px;top:748.6px;width:916px;height:1.5px;background:#e6eaef"></div>
<div class="cell" style="left:909px;width:300px;top:749.3px">华中地区</div>
<div class="cell" style="left:1161px;width:300px;top:749.3px">湖南长沙移动 2.010s</div>
<div class="cell" style="left:1436px;width:300px;top:749.3px">河南郑州移动 6.768s</div>
<div class="cell" style="left:1642px;width:300px;top:749.3px">2.893s</div>
<div class="abs" style="left:945px;top:804.8px;width:916px;height:1.5px;background:#e6eaef"></div>
<div class="cell" style="left:909px;width:300px;top:805.5px">华北地区</div>
<div class="cell" style="left:1161px;width:300px;top:805.5px">内蒙古联通 2.093s</div>
<div class="cell" style="left:1436px;width:300px;top:805.5px">内蒙古移动 8.343s</div>
<div class="cell" style="left:1642px;width:300px;top:805.5px">3.899s</div>
<div class="abs" style="left:945px;top:861.0px;width:916px;height:1.5px;background:#e6eaef"></div>
<div class="cell" style="left:909px;width:300px;top:861.7px">西南地区</div>
<div class="cell" style="left:1161px;width:300px;top:861.7px">重庆移动 1.851s</div>
<div class="cell" style="left:1436px;width:300px;top:861.7px">重庆联通 6.022s</div>
<div class="cell" style="left:1642px;width:300px;top:861.7px">3.611s</div>
<div class="abs" style="left:945px;top:917.2px;width:916px;height:1.5px;background:#e6eaef"></div>
<div class="cell" style="left:909px;width:300px;top:917.9px">西北地区</div>
<div class="cell" style="left:1161px;width:300px;top:917.9px">甘肃兰州移动 2.371s</div>
<div class="cell" style="left:1436px;width:300px;top:917.9px">陕西西安联通 7.486s</div>
<div class="cell" style="left:1642px;width:300px;top:917.9px">3.722s</div>
<div class="abs" style="left:945px;top:973.4px;width:916px;height:1.5px;background:#e6eaef"></div>
<div class="cell" style="left:909px;width:300px;top:974.1px">东北地区</div>
<div class="cell" style="left:1161px;width:300px;top:974.1px">黑龙江哈尔滨移动 2.265s</div>
<div class="cell" style="left:1436px;width:300px;top:974.1px">辽宁大连电信 5.536s</div>
<div class="cell" style="left:1642px;width:300px;top:974.1px">3.248s</div>
<div class="abs" style="left:945px;top:1029.6px;width:916px;height:1.5px;background:#e6eaef"></div>
<div class="cell" style="left:909px;width:300px;top:1030.3px">港澳台</div>
<div class="cell" style="left:1161px;width:300px;top:1030.3px">中国香港 1.635s</div>
<div class="cell" style="left:1436px;width:300px;top:1030.3px">中国台湾 1.760s</div>
<div class="cell" style="left:1642px;width:300px;top:1030.3px">1.698s</div>
<!-- bottom -->
<div class="abs" style="left:28px;top:1143px;width:5px;height:30px;background:#5288f8"></div>
<div class="abs" style="left:52px;top:1140px;height:36px;line-height:36px;font-size:23px;color:#4a4f55">域名解析统计</div>
<div class="abs" style="left:208px;top:1144px;width:36px;height:34px;border-radius:5px;background:#dce8fc;color:#5288f8;font-size:19.5px;line-height:34px;text-align:center">13</div>
<div class="abs" style="left:262px;top:1144px;width:90px;height:34px;border-radius:5px;background:#fdeedd;color:#f0a040;font-size:18px;line-height:34px">
<svg class="abs" style="left:8px;top:9px" width="17" height="17" viewBox="0 0 17 17"><path d="M4.5 11.5H2V2h9.5v2.5" fill="none" stroke="#f0a040" stroke-width="1.6"/><rect x="6" y="6" width="9" height="9" rx="1" fill="none" stroke="#f0a040" stroke-width="1.6"/></svg>
<span class="abs" style="left:31px;top:0">复制IP</span></div>
<div class="abs" style="left:1774px;top:1141px;height:36px;line-height:36px;font-size:19.5px;color:#4a4f55">收起</div>
<svg class="abs" style="left:1819px;top:1151px" width="14" height="16" viewBox="0 0 14 16"><path d="M2.5 7.5L7 3L11.5 7.5M2.5 13L7 8.5L11.5 13" fill="none" stroke="#4a4f55" stroke-width="1.6"/></svg>
<div class="abs" style="left:4px;top:1198.5px;width:1857px;height:1.5px;background:#e6eaef"></div>

<div class="card" style="left:16.0px;top:1211.5px"><span class="ip">3.166.96.83</span><span class="pc">17.65%</span></div>
<div class="card" style="left:322.2px;top:1211.5px"><span class="ip">解析失败</span><span class="pc">15.13%</span></div>
<div class="card" style="left:628.4px;top:1211.5px"><span class="ip">3.166.96.16</span><span class="pc">12.61%</span></div>
<div class="card" style="left:934.6px;top:1211.5px"><span class="ip">3.166.96.87</span><span class="pc">10.08%</span></div>
<div class="card" style="left:1240.8px;top:1211.5px"><span class="ip">3.168.102.16</span><span class="pc">9.24%</span></div>
<div class="card" style="left:1547.0px;top:1211.5px"><span class="ip">3.168.102.116</span><span class="pc">7.56%</span></div>
<div class="card" style="left:16.0px;top:1263.7px"><span class="ip">3.168.102.112</span><span class="pc">5.88%</span></div>
<div class="card" style="left:322.2px;top:1263.7px"><span class="ip">3.168.102.53</span><span class="pc">5.88%</span></div>
<div class="card" style="left:628.4px;top:1263.7px"><span class="ip">3.166.96.48</span><span class="pc">5.04%</span></div>
<div class="card" style="left:934.6px;top:1263.7px"><span class="ip">13.33.183.10</span><span class="pc">4.20%</span></div>
<div class="card" style="left:1240.8px;top:1263.7px"><span class="ip">13.33.183.82</span><span class="pc">3.36%</span></div>
<div class="card" style="left:1547.0px;top:1263.7px"><span class="ip">13.33.183.67</span><span class="pc">2.52%</span></div>
<div class="card" style="left:16.0px;top:1315.9px"><span class="ip">13.33.183.33</span><span class="pc">0.84%</span></div>
<!-- watermark -->
<svg class="abs" style="left:1725px;top:1218px" width="85" height="84" viewBox="0 0 1402 1386">
<defs><mask id="cm" maskUnits="userSpaceOnUse" x="0" y="0" width="1402" height="1386">
<rect x="0" y="0" width="1402" height="1386" fill="#fff"/>
<path d="M235 265 L450 292 L690 350 L705 368 L615 402 L450 345 L262 318 Z" fill="#000"/>
<path d="M1155 265 L940 292 L700 350 L685 368 L775 402 L940 345 L1128 318 Z" fill="#000"/>
<path d="M205 262 L262 318 L322 615 L292 672 L212 400 Z" fill="#000"/>
<path d="M1185 262 L1128 318 L1068 615 L1098 672 L1178 400 Z" fill="#000"/>
<path d="M620 400 L695 360 L770 400 L1030 660 Q1070 710 1040 770 L760 1040 L760 1400 L630 1400 L630 1040 L350 770 Q320 710 360 660 Z" fill="#000"/>
</mask></defs>
<g mask="url(#cm)" fill="#f05a24">
<path d="M195 262 L300 255 Q480 90 700 88 Q920 90 1090 255 L1195 262 L1190 390 Q1290 600 1300 850 Q1300 1080 1160 1250 Q1070 1315 960 1310 Q830 1290 775 1150 L760 1045 L630 1045 L620 1150 Q570 1290 420 1310 Q300 1310 220 1240 Q90 1080 90 850 Q100 600 210 390 Z"/>
</g>
<path d="M430 790 L605 870 L525 878 Z M960 790 L785 870 L865 878 Z" fill="#f05a24"/>
</svg>
<svg class="abs" style="left:1720px;top:1300px" width="95" height="80" viewBox="0 0 1646 1386">
<g fill="none" stroke="#444" stroke-width="48" stroke-linejoin="miter">
<rect x="139" y="294" width="188" height="208"/>
<path d="M435 165 V502 H632 V294 H435"/>
<path d="M720 294 H904 V525 M904 408 H722 V502 H904"/>
<path d="M1013 165 V502 H1208 V294 H1013"/>
<path d="M1300 285 L1395 525 M1480 285 L1345 640"/>
</g>
<g fill="#444"><rect x="90" y="688" width="148" height="30"/><rect x="1360" y="688" width="148" height="30"/></g>
</svg>
<div class="abs" style="left:1736px;top:1336px;width:60px;text-align:center;font-size:8.5px;line-height:10px;color:#555;font-weight:bold;white-space:nowrap;letter-spacing:0.5px">obaby@mars</div>
<div class="abs" style="left:1730px;top:1349px;width:78px;text-align:center;font-size:10px;line-height:13px;color:#f8a2b3;font-weight:bold;white-space:nowrap;letter-spacing:-0.45px">https://oba.by</div>
<div class="abs" style="left:1728px;top:1363px;width:82px;text-align:center;font-size:10px;line-height:13px;color:#f8a2b3;font-weight:bold;white-space:nowrap;letter-spacing:-0.45px">https://h4ck.org.cn</div>
</body></html>
